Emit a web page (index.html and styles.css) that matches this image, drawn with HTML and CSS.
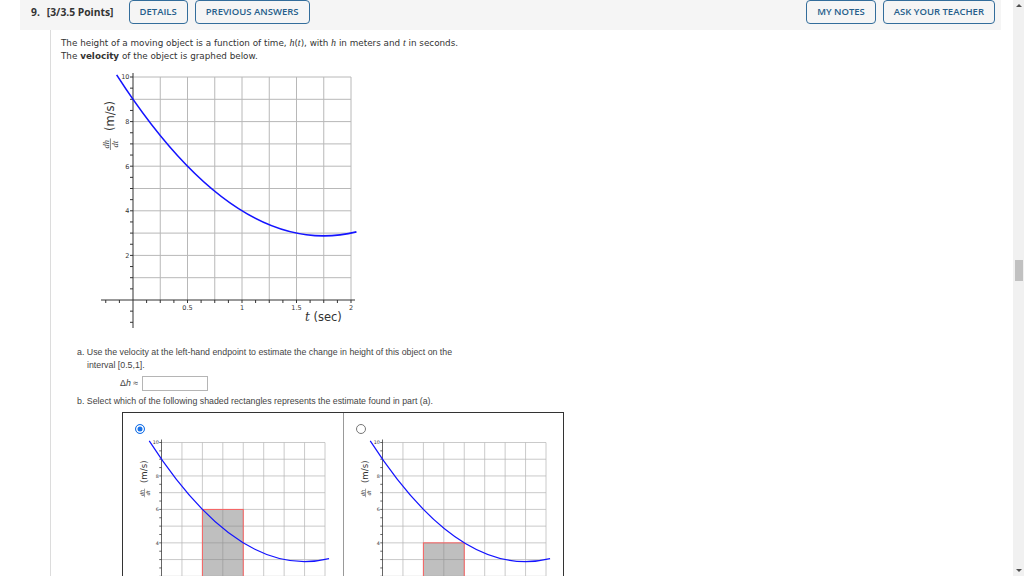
FILE: index.html
```html
<!DOCTYPE html>
<html>
<head>
<meta charset="utf-8">
<title>Question 9</title>
<link rel="stylesheet" href="styles.css">
</head>
<body>
<div class="page">
  <div class="qhead">
    <div class="qnum"><span>9.</span><span>[3/3.5 Points]</span></div>
    <div class="btn">DETAILS</div>
    <div class="btn">PREVIOUS ANSWERS</div>
    <div class="spacer"></div>
    <div class="btn">MY NOTES</div>
    <div class="btn">ASK YOUR TEACHER</div>
  </div>
  <div class="qbody">
    <p class="intro">The height of a moving object is a function of time, <i class="m">h</i>(<i class="m">t</i>), with <i class="m">h</i> in meters and <i class="m">t</i> in seconds.<br>The <b>velocity</b> of the object is graphed below.</p>

    <svg class="plot big" viewBox="0 0 270 264">
      <path class="grid" d="M38 210.7H256M38 188.4H256M38 166.1H256M38 143.8H256M38 121.5H256M38 99.2H256M38 76.9H256M38 54.6H256M38 32.3H256M38 10H256M65.25 10V233M92.5 10V233M119.75 10V233M147 10V233M174.25 10V233M201.5 10V233M228.75 10V233M256 10V233"/>
      <path class="axis" d="M38 6V261M6 233H260M10.75 233v3M24.4 233v3M51.6 233v3M65.25 233v3M78.9 233v3M92.5 233v3M106.1 233v3M119.75 233v3M133.4 233v3M147 233v3M160.6 233v3M174.25 233v3M187.9 233v3M201.5 233v3M215.1 233v3M228.75 233v3M242.4 233v3M256 233v3M35 255.3h3M35 244.15h3M35 221.85h3M35 210.7h3M35 199.55h3M35 188.4h3M35 177.25h3M35 166.1h3M35 154.95h3M35 143.8h3M35 132.65h3M35 121.5h3M35 110.35h3M35 99.2h3M35 88.05h3M35 76.9h3M35 65.75h3M35 54.6h3M35 43.45h3M35 32.3h3M35 21.15h3M35 10h3"/>
      <path class="curve" d="M21.65 7.88Q141.55 194.31 261.45 164.87"/>
      <text class="tl" x="34.5" y="12.3" text-anchor="end">10</text>
      <text class="tl" x="34.5" y="56.9" text-anchor="end">8</text>
      <text class="tl" x="34.5" y="101.5" text-anchor="end">6</text>
      <text class="tl" x="34.5" y="146.1" text-anchor="end">4</text>
      <text class="tl" x="34.5" y="190.7" text-anchor="end">2</text>
      <text class="tl" x="92.5" y="242.5" text-anchor="middle">0.5</text>
      <text class="tl" x="147" y="242.5" text-anchor="middle">1</text>
      <text class="tl" x="201.5" y="242.5" text-anchor="middle">1.5</text>
      <text class="tl" x="256" y="242.5" text-anchor="middle">2</text>
      <g transform="translate(19 60) rotate(-90)">
        <text class="ax" x="-4" y="0">(m/s)</text>
        <text class="fr" x="-17.3" y="-5" text-anchor="middle">dh</text>
        <path class="fl" d="M-23 -3.6H-11.5"/>
        <text class="fr" x="-17.3" y="3.6" text-anchor="middle">dt</text>
      </g>
      <text class="ax" x="210" y="253.5"><tspan class="mt">t</tspan> (sec)</text>
    </svg>

    <div class="parts">
      <p class="part">a. Use the velocity at the left-hand endpoint to estimate the change in height of this object on the interval [0.5,1].</p>
      <div class="answer"><span class="lbl">Δ<i>h</i> ≈</span><span class="input"></span></div>
      <p class="part partb">b. Select which of the following shaded rectangles represents the estimate found in part (a).</p>
      <div class="choices">
        <div class="choice">
          <span class="radio on"></span>
          <svg class="plot mini" viewBox="0 0 270 264">
            <path class="grid" d="M38 210.7H256M38 188.4H256M38 166.1H256M38 143.8H256M38 121.5H256M38 99.2H256M38 76.9H256M38 54.6H256M38 32.3H256M38 10H256M65.25 10V233M92.5 10V233M119.75 10V233M147 10V233M174.25 10V233M201.5 10V233M228.75 10V233M256 10V233"/>
            <rect class="shade" x="92.5" y="99.2" width="54.5" height="133.8"/>
            <path class="axis" d="M38 6V261M6 233H260M10.75 233v3M24.4 233v3M51.6 233v3M65.25 233v3M78.9 233v3M92.5 233v3M106.1 233v3M119.75 233v3M133.4 233v3M147 233v3M160.6 233v3M174.25 233v3M187.9 233v3M201.5 233v3M215.1 233v3M228.75 233v3M242.4 233v3M256 233v3M35 255.3h3M35 244.15h3M35 221.85h3M35 210.7h3M35 199.55h3M35 188.4h3M35 177.25h3M35 166.1h3M35 154.95h3M35 143.8h3M35 132.65h3M35 121.5h3M35 110.35h3M35 99.2h3M35 88.05h3M35 76.9h3M35 65.75h3M35 54.6h3M35 43.45h3M35 32.3h3M35 21.15h3M35 10h3"/>
            <path class="curve" d="M21.65 7.88Q141.55 194.31 261.45 164.87"/>
            <text class="tl" x="34.5" y="12.3" text-anchor="end">10</text>
            <text class="tl" x="34.5" y="56.9" text-anchor="end">8</text>
            <text class="tl" x="34.5" y="101.5" text-anchor="end">6</text>
            <text class="tl" x="34.5" y="146.1" text-anchor="end">4</text>
            <g transform="translate(19 60) rotate(-90)">
              <text class="ax" x="-4" y="0">(m/s)</text>
              <text class="fr" x="-17.3" y="-5" text-anchor="middle">dh</text>
              <path class="fl" d="M-23 -3.6H-11.5"/>
              <text class="fr" x="-17.3" y="3.6" text-anchor="middle">dt</text>
            </g>
          </svg>
        </div>
        <div class="choice">
          <span class="radio"></span>
          <svg class="plot mini" viewBox="0 0 270 264">
            <path class="grid" d="M38 210.7H256M38 188.4H256M38 166.1H256M38 143.8H256M38 121.5H256M38 99.2H256M38 76.9H256M38 54.6H256M38 32.3H256M38 10H256M65.25 10V233M92.5 10V233M119.75 10V233M147 10V233M174.25 10V233M201.5 10V233M228.75 10V233M256 10V233"/>
            <rect class="shade" x="92.5" y="143.8" width="54.5" height="89.2"/>
            <path class="axis" d="M38 6V261M6 233H260M10.75 233v3M24.4 233v3M51.6 233v3M65.25 233v3M78.9 233v3M92.5 233v3M106.1 233v3M119.75 233v3M133.4 233v3M147 233v3M160.6 233v3M174.25 233v3M187.9 233v3M201.5 233v3M215.1 233v3M228.75 233v3M242.4 233v3M256 233v3M35 255.3h3M35 244.15h3M35 221.85h3M35 210.7h3M35 199.55h3M35 188.4h3M35 177.25h3M35 166.1h3M35 154.95h3M35 143.8h3M35 132.65h3M35 121.5h3M35 110.35h3M35 99.2h3M35 88.05h3M35 76.9h3M35 65.75h3M35 54.6h3M35 43.45h3M35 32.3h3M35 21.15h3M35 10h3"/>
            <path class="curve" d="M21.65 7.88Q141.55 194.31 261.45 164.87"/>
            <text class="tl" x="34.5" y="12.3" text-anchor="end">10</text>
            <text class="tl" x="34.5" y="56.9" text-anchor="end">8</text>
            <text class="tl" x="34.5" y="101.5" text-anchor="end">6</text>
            <text class="tl" x="34.5" y="146.1" text-anchor="end">4</text>
            <g transform="translate(19 60) rotate(-90)">
              <text class="ax" x="-4" y="0">(m/s)</text>
              <text class="fr" x="-17.3" y="-5" text-anchor="middle">dh</text>
              <path class="fl" d="M-23 -3.6H-11.5"/>
              <text class="fr" x="-17.3" y="3.6" text-anchor="middle">dt</text>
            </g>
          </svg>
        </div>
      </div>
    </div>
  </div>
</div>
<div class="scrollbar">
  <div class="sb-btn"><span class="arrow up"></span></div>
  <div class="sb-track"><div class="sb-thumb"></div></div>
  <div class="sb-btn"><span class="arrow down"></span></div>
</div>
</body>
</html>
```

FILE: styles.css
```css
html, body {
  margin: 0;
  padding: 0;
}
body {
  display: flex;
  height: 576px;
  overflow: hidden;
  background: #fff;
  font-family: "Open Sans", "DejaVu Sans", sans-serif;
  color: #333;
}
.page {
  flex: 1;
  min-width: 0;
  padding: 0 12px 0 20px;
}
.qhead {
  height: 30px;
  background: #f5f5f5;
  display: flex;
  align-items: flex-start;
  gap: 7px;
  padding: 0 6px 0 11px;
}
.qnum {
  display: flex;
  gap: 7px;
  font-size: 10.3px;
  font-weight: 700;
  line-height: 24px;
  color: #333;
  margin-right: 8px;
}
.btn {
  box-sizing: border-box;
  height: 24px;
  border: 1px solid #336d9b;
  border-radius: 4px;
  padding: 0 10px;
  font-size: 9.5px;
  font-weight: 600;
  line-height: 22px;
  color: #255e8b;
  white-space: nowrap;
}
.spacer {
  flex: 1;
}
.qbody {
  margin-left: 30px;
  border-left: 1px solid #dcdcdc;
  padding: 5.5px 0 0 10px;
}
.intro {
  margin: 0;
  font-family: "DejaVu Sans", Verdana, sans-serif;
  font-size: 8.8px;
  line-height: 13px;
  color: #333;
}
.intro .m {
  font-family: "Liberation Serif", serif;
  font-size: 10px;
}
.plot {
  display: block;
}
.plot.big {
  width: 270px;
  height: 264px;
  margin: 4.5px 0 0 34px;
}
.plot.mini {
  width: 202.5px;
  height: 198px;
  margin-top: 0.5px;
}
.grid {
  fill: none;
  stroke: #b8b8b8;
  stroke-width: 1;
}
.axis {
  fill: none;
  stroke: #333;
  stroke-width: 1;
}
.curve {
  fill: none;
  stroke: #1414ff;
  stroke-width: 1.6;
}
.shade {
  fill: #7f7f7f;
  fill-opacity: 0.5;
  stroke: #ff5a5a;
  stroke-width: 1.2;
}
.tl {
  font-family: "DejaVu Sans", sans-serif;
  font-size: 6.5px;
  fill: #333;
}
.ax {
  font-family: "DejaVu Sans", sans-serif;
  font-size: 11.5px;
  fill: #333;
}
.mt {
  font-family: "DejaVu Serif", serif;
  font-style: italic;
  font-size: 12px;
}
.fr {
  font-family: "Liberation Serif", serif;
  font-style: italic;
  font-size: 8.5px;
  fill: #333;
}
.fl {
  stroke: #333;
  stroke-width: 0.6;
}
.parts {
  margin: 14.5px 0 0 16px;
  font-family: "Liberation Sans", Arial, sans-serif;
  font-size: 8.8px;
  line-height: 13px;
  color: #444;
}
.part {
  margin: 0;
  width: 380px;
  padding-left: 10px;
  text-indent: -10px;
}
.partb {
  width: auto;
  margin-top: 3.5px;
}
.answer {
  display: flex;
  align-items: center;
  gap: 3px;
  height: 15px;
  margin: 4.5px 0 0 43px;
}
.lbl {
  width: 19px;
  white-space: nowrap;
}
.input {
  box-sizing: border-box;
  width: 66px;
  height: 15px;
  border: 1px solid #b5b5b5;
  background: #fff;
}
.choices {
  display: grid;
  grid-template-columns: 220px 220px;
  width: 440px;
  margin: 4.5px 0 0 45px;
  border: 1px solid #333;
  height: 200px;
}
.choice {
  padding: 11px 0 0 10px;
}
.choice + .choice {
  border-left: 1px solid #999;
}
.radio {
  display: block;
  box-sizing: border-box;
  width: 10px;
  height: 10px;
  margin-left: 2px;
  border-radius: 50%;
  border: 1px solid #767676;
  background: #fff;
}
.radio.on {
  border: 1.5px solid #1a73e8;
  background: #1a73e8;
  box-shadow: inset 0 0 0 1.5px #fff;
}
.scrollbar {
  width: 11px;
  flex: none;
  background: #f1f1f1;
  display: flex;
  flex-direction: column;
}
.sb-btn {
  height: 11px;
  display: flex;
  align-items: center;
  justify-content: center;
}
.arrow {
  width: 0;
  height: 0;
  border-left: 3px solid transparent;
  border-right: 3px solid transparent;
}
.arrow.up {
  border-bottom: 3px solid #505050;
}
.arrow.down {
  border-top: 3px solid #505050;
}
.sb-track {
  flex: 1;
  padding-top: 249px;
  display: flex;
  justify-content: center;
}
.sb-thumb {
  width: 8px;
  height: 21px;
  background: #c1c1c1;
}
```
